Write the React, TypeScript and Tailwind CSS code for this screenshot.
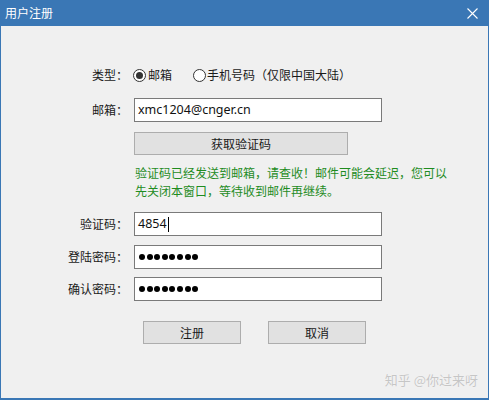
import React from 'react';

const FONT = "font-['Microsoft_YaHei','Noto_Sans_CJK_SC',sans-serif]";

const Label = ({ children }: { children: React.ReactNode }) => (
  <div className="w-[127px] shrink-0 text-right text-[12px] leading-none text-[#1a1a1a]">{children}</div>
);

const Input = ({ children }: { children?: React.ReactNode }) => (
  <div className="ml-[6px] flex h-[24px] w-[248px] items-center border border-[#7a7a7a] bg-white pl-[3px]">
    {children}
  </div>
);

const Dots = () => (
  <div className="flex gap-[1.6px] pl-[1px]">
    {Array.from({ length: 8 }).map((_, i) => (
      <span key={i} className="block h-[6px] w-[6px] rounded-full bg-black" />
    ))}
  </div>
);

const Radio = ({ checked }: { checked?: boolean }) => (
  <span className="flex h-[13px] w-[13px] items-center justify-center rounded-full border border-[#333] bg-white">
    {checked && <span className="block h-[7px] w-[7px] rounded-full bg-[#333]" />}
  </span>
);

const WinButton = ({ className, children }: { className?: string; children: React.ReactNode }) => (
  <div
    className={`flex h-[23px] items-center justify-center border border-[#adadad] bg-[#e1e1e1] text-[12px] text-[#1a1a1a] ${className ?? ''}`}
  >
    {children}
  </div>
);

export default function App() {
  return (
    <div className={`flex h-[400px] w-[489px] flex-col bg-[#3a77b5] px-[1px] pb-[2px] ${FONT}`}>
      {/* 标题栏 */}
      <div className="flex h-[26px] shrink-0 items-center justify-between pl-[4px] pr-[10px] text-white">
        <span className="text-[12px]">用户注册</span>
        <svg width="11" height="11" viewBox="0 0 11 11" className="mt-[1px]">
          <path d="M0.5 0.5 L10.5 10.5 M10.5 0.5 L0.5 10.5" stroke="white" strokeWidth="1.1" fill="none" />
        </svg>
      </div>

      <div className="relative flex flex-1 flex-col bg-[#f0f0f0]">
        {/* 类型 */}
        <div className="mt-[42px] flex h-[14px] items-center">
          <Label>类型：</Label>
          <div className="ml-[5px] flex items-center text-[12px] text-[#1a1a1a]">
            <Radio checked />
            <span className="ml-[2px]">邮箱</span>
            <span className="ml-[21px]" />
            <Radio />
            <span className="ml-[1px]">手机号码（仅限中国大陆）</span>
          </div>
        </div>

        {/* 邮箱 */}
        <div className="mt-[16px] flex items-center">
          <Label>邮箱：</Label>
          <Input>
            <span className="font-['Noto_Sans',sans-serif] text-[12.5px] text-[#111]">xmc1204@cnger.cn</span>
          </Input>
        </div>

        <div className="mt-[10px] flex">
          <div className="w-[133px] shrink-0" />
          <WinButton className="w-[214px]">获取验证码</WinButton>
        </div>

        <p className="ml-[134px] mt-[9px] w-[320px] text-[12px] leading-[18px] text-[#1f8c1f]">
          验证码已经发送到邮箱，请查收！邮件可能会延迟，您可以先关闭本窗口，等待收到邮件再继续。
        </p>

        {/* 验证码 */}
        <div className="mt-[12px] flex items-center">
          <Label>验证码：</Label>
          <Input>
            <span className="font-['Noto_Sans',sans-serif] text-[12.5px] text-[#111]">4854</span>
            <span className="ml-[1px] block h-[15px] w-[1px] bg-black" />
          </Input>
        </div>

        <div className="mt-[9px] flex items-center">
          <Label>登陆密码：</Label>
          <Input>
            <Dots />
          </Input>
        </div>

        <div className="mt-[8px] flex items-center">
          <Label>确认密码：</Label>
          <Input>
            <Dots />
          </Input>
        </div>

        <div className="mt-[20px] flex">
          <div className="w-[142px] shrink-0" />
          <WinButton className="w-[98px]">注册</WinButton>
          <div className="w-[27px] shrink-0" />
          <WinButton className="w-[98px]">取消</WinButton>
        </div>

        <span className="absolute bottom-[9px] right-[10px] text-[13px] text-[#c6c6c6] [text-shadow:0_0_1px_#fff]">
          知乎 @你过来呀
        </span>
      </div>
    </div>
  );
}
